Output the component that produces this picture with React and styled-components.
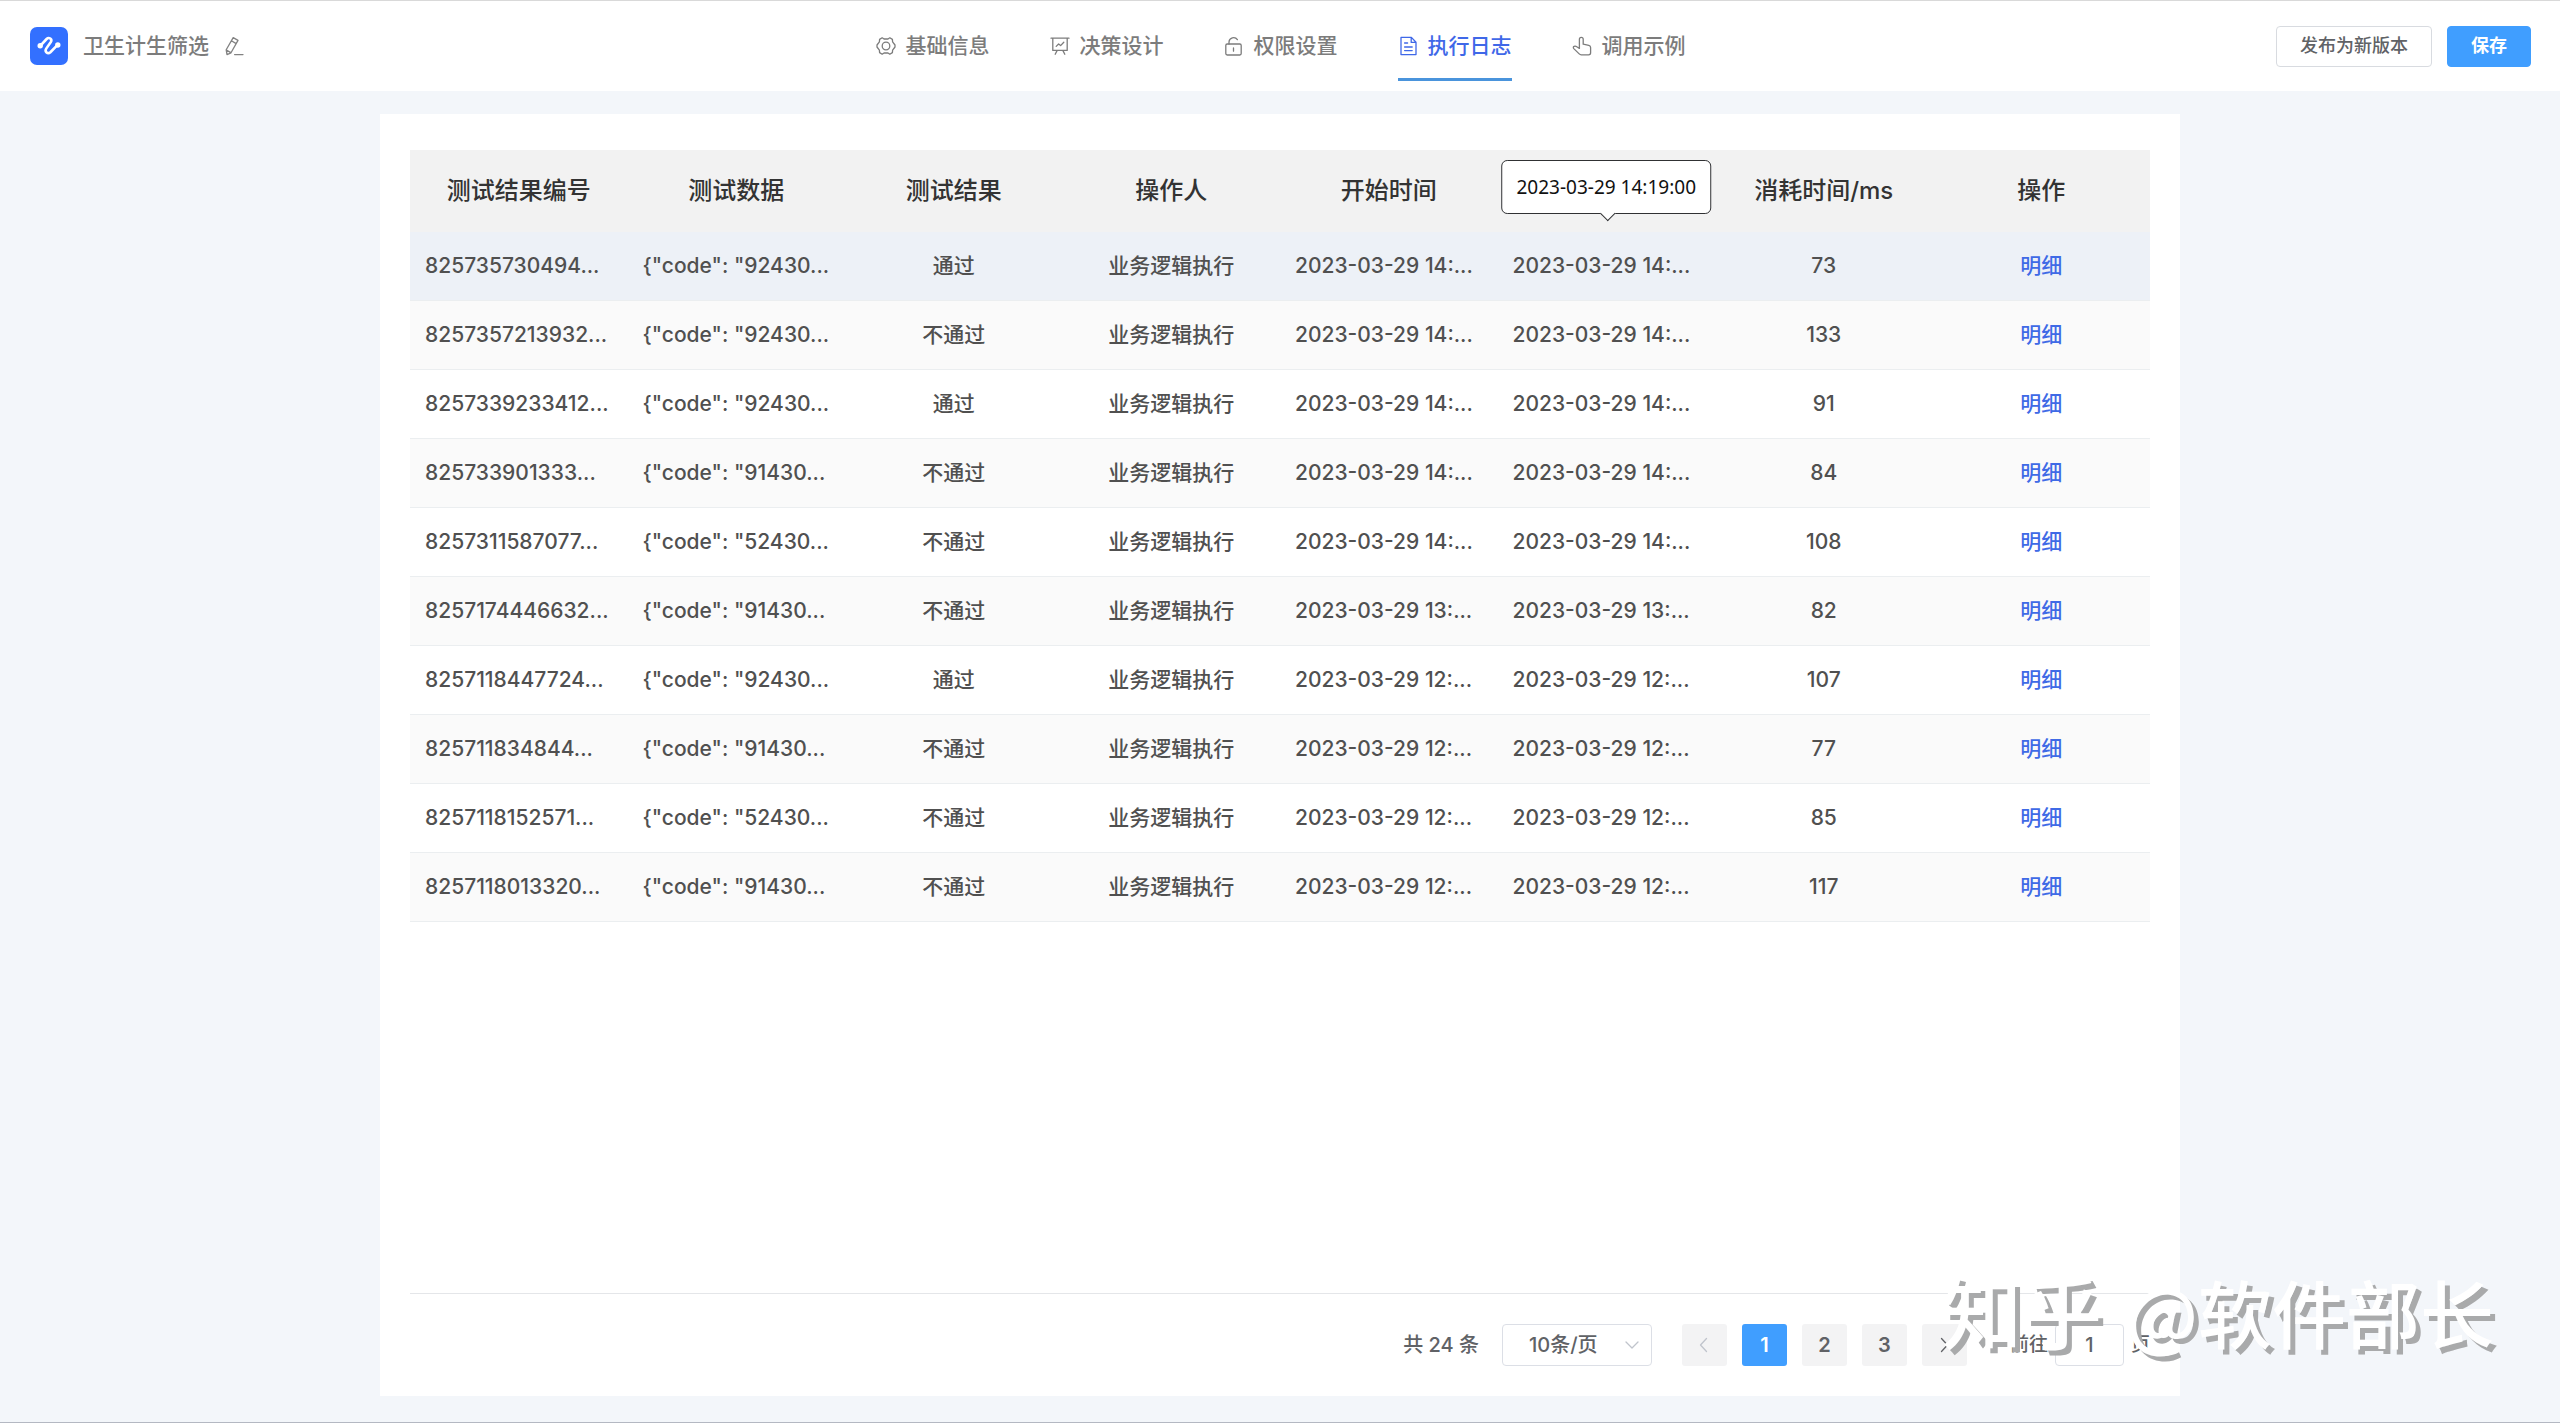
import React, { useState } from 'react';
import styled, { createGlobalStyle } from 'styled-components';

const GlobalStyle = createGlobalStyle`
  * {
    box-sizing: border-box;
  }

  body {
    margin: 0;
    background: #f3f6fa;
    font-family: Inter, 'Noto Sans CJK SC', sans-serif;
    font-weight: 500;
    color: #505050;
  }

  button, input, select {
    font-family: inherit;
    font-weight: inherit;
  }
`;

const Page = styled.div`
  display: flex;
  flex-direction: column;
  min-height: 100vh;
  border-top: 1px solid #d9d9d9;
  border-bottom: 1px solid #b4b8c2;
`;

const Header = styled.header`
  display: grid;
  grid-template-columns: 1fr auto 1fr;
  align-items: center;
  height: 90px;
  padding: 0 29px 0 30px;
  background: #fff;
`;

const Brand = styled.div`
  display: flex;
  align-items: center;
  gap: 15px;
`;

const Logo = styled.svg`
  width: 38px;
  height: 38px;
`;

const Title = styled.h1`
  margin: 0;
  font-size: 21px;
  line-height: 30px;
  font-weight: 500;
  color: #7c7c7c;
`;

const EditButton = styled.button`
  display: flex;
  padding: 0;
  border: 0;
  background: none;
  color: #828282;
  cursor: pointer;
`;

const Icon = styled.svg`
  width: 20px;
  height: 20px;
  flex: none;
  fill: none;
  stroke: currentColor;
  stroke-width: 1.3;
  stroke-linecap: round;
  stroke-linejoin: round;
`;

const Tabs = styled.nav`
  display: flex;
  align-self: stretch;
  align-items: center;
  gap: 60px;
`;

const Tab = styled.a`
  display: flex;
  align-items: center;
  gap: 10px;
  height: 70px;
  border-top: 3px solid transparent;
  border-bottom: 3px solid ${props => (props.$active ? '#4a94dc' : 'transparent')};
  font-size: 21px;
  line-height: 30px;
  text-decoration: none;
  color: ${props => (props.$active ? '#3f68e8' : '#7c7c7c')};
`;

const Actions = styled.div`
  display: flex;
  justify-content: flex-end;
  gap: 15px;
`;

const Button = styled.button`
  height: 41px;
  padding: 0 23px;
  border: 1px solid ${props => (props.$primary ? '#409eff' : '#d8dbe0')};
  border-radius: 4px;
  background: ${props => (props.$primary ? '#409eff' : '#fff')};
  color: ${props => (props.$primary ? '#fff' : '#606266')};
  font-size: 18px;
  font-weight: ${props => (props.$primary ? 700 : 500)};
  line-height: 24px;
  cursor: pointer;
`;

const Panel = styled.main`
  display: flex;
  flex: 1;
  flex-direction: column;
  width: calc(100% - 760px);
  min-width: 1200px;
  margin: 23px auto 26px;
  padding: 36px 30px 0;
  background: #fff;
`;

const Table = styled.table`
  width: 100%;
  border-collapse: separate;
  border-spacing: 0;
  table-layout: fixed;
`;

const HeadCell = styled.th`
  height: 82px;
  padding: 0;
  background: #f2f2f2;
  color: #333;
  font-size: 24px;
  font-weight: 500;
  line-height: 34px;
`;

const Row = styled.tr`
  background: ${props => (props.$hovered ? '#edf1f7' : '#fff')};

  &:nth-child(even) {
    background: #fafafa;
  }
`;

const Cell = styled.td`
  height: 69px;
  padding: 0 15px;
  border-bottom: 1px solid #ebeef0;
  font-size: 21px;
  line-height: 30px;
  text-align: ${props => (props.$clipped ? 'left' : 'center')};
  white-space: nowrap;
`;

const DetailLink = styled.a`
  color: #3f6ae6;
  text-decoration: none;
`;

const TipAnchor = styled.div`
  position: relative;
`;

const Tooltip = styled.div`
  position: absolute;
  left: 50%;
  bottom: 67px;
  padding: 12px 14px;
  border: 1px solid #303133;
  border-radius: 6px;
  background: #fff;
  color: #111;
  font-family: 'Noto Sans', sans-serif;
  font-size: 19px;
  font-weight: 400;
  line-height: 28px;
  transform: translateX(-50%);

  &::after {
    content: '';
    position: absolute;
    left: 50%;
    bottom: -6px;
    width: 10px;
    height: 10px;
    margin-left: -4px;
    border: solid #303133;
    border-width: 0 1px 1px 0;
    background: #fff;
    transform: rotate(45deg);
  }
`;

const Footer = styled.footer`
  display: flex;
  align-items: center;
  justify-content: flex-end;
  height: 103px;
  margin-top: auto;
  border-top: 1px solid #e4e6e9;
  font-size: 20px;
  line-height: 28px;
  color: #606266;
`;

const SizePicker = styled.div`
  display: flex;
  align-items: center;
  width: 150px;
  height: 42px;
  margin: 0 30px 0 23px;
  padding-right: 9px;
  border: 1px solid #dcdfe6;
  border-radius: 4px;
  color: #c0c4cc;
`;

const SizeSelect = styled.select`
  flex: 1;
  min-width: 0;
  height: 40px;
  padding: 0 0 0 26px;
  border: 0;
  background: none;
  appearance: none;
  color: #606266;
  font-size: 20px;
`;

const Pager = styled.div`
  display: flex;
  gap: 15px;
`;

const PageButton = styled.button`
  display: flex;
  align-items: center;
  justify-content: center;
  width: 45px;
  height: 42px;
  padding: 0;
  border: 0;
  border-radius: 3px;
  background: ${props => (props.$active ? '#409eff' : '#f3f3f4')};
  color: ${props => (props.$active ? '#fff' : '#606266')};
  font-size: 20px;
  font-weight: 600;

  &:disabled {
    color: #c0c4cc;
  }
`;

const Jump = styled.label`
  display: flex;
  align-items: center;
  gap: 7px;
  margin-left: 43px;
  font-size: 19px;
`;

const JumpInput = styled.input`
  width: 69px;
  height: 42px;
  border: 1px solid #dcdfe6;
  border-radius: 4px;
  color: #606266;
  font-size: 20px;
  text-align: center;
`;

const Watermark = styled.div`
  position: fixed;
  right: 66px;
  bottom: 57px;
  display: flex;
  align-items: baseline;
  gap: 24px;
  color: #fff;
  font-family: 'Noto Sans CJK SC', sans-serif;
  font-size: 74px;
  font-weight: 500;
  line-height: 110px;
  text-shadow: 5px 5px 0 #a9aaab;
  white-space: nowrap;
  pointer-events: none;
`;

const WatermarkSite = styled.span`
  font-size: 80px;
`;

const GearIcon = () => (
  <Icon viewBox="0 0 20 20">
    <path d="M6.2 1.8 8 3h4l1.8-1.2 2.6 1.6.2 2.4 2.4 3.2v2l-2.4 3.2-.2 2.4-2.6 1.6L12 17H8l-1.8 1.2-2.6-1.6-.2-2.4L1 11V9l2.4-3.2.2-2.4z" />
    <circle cx="10" cy="10" r="3.8" />
  </Icon>
);

const BoardIcon = () => (
  <Icon viewBox="0 0 20 20">
    <path d="M1 2.2h18M2.8 2.2v12.2h14.4V2.2M7.2 14.4l-2 3.8M12.8 14.4l2 3.8M6.2 10.4l2.4-2.4 2 1.6 3.2-3.4" />
  </Icon>
);

const LockIcon = () => (
  <Icon viewBox="0 0 20 20">
    <rect x="1.8" y="8" width="15.4" height="11" rx="1.4" />
    <path d="M5 8V6a4.6 4.6 0 0 1 8.4-2.4M9.5 12v3.2" />
  </Icon>
);

const FileIcon = () => (
  <Icon viewBox="0 0 20 20">
    <path d="M3 1.4h10.4l4.6 4.8v12.4H3zM13.2 1.6v4.8H18M6.6 7h3M6.6 11h7.6M6.6 14.6h7.6" />
  </Icon>
);

const HandIcon = () => (
  <Icon viewBox="0 0 20 20">
    <path d="M7.4 12.4V3.2a1.9 1.9 0 0 1 3.8 0v5l5.6 1.2c1.2.3 1.8 1.1 1.8 2.2v5.2c0 1.2-.8 2-2 2H9.2c-.8 0-1.4-.3-2-.9l-5.4-5.3c-.7-.8-.6-1.8.2-2.2 1-.6 2-.3 2.8.4z" />
  </Icon>
);

const PencilIcon = () => (
  <Icon viewBox="0 0 20 20">
    <path d="m9.2 1.6 4.8 2.8-7 12.4-4 1.8-.8-4.8zM7.4 4.8l4.8 2.8M2.4 14l4.4 2.6M10.6 18.6H19" />
  </Icon>
);

const Chevron = ({ d }) => (
  <Icon viewBox="0 0 20 20">
    <path d={d} />
  </Icon>
);

const TABS = [
  { label: '基础信息', icon: GearIcon },
  { label: '决策设计', icon: BoardIcon },
  { label: '权限设置', icon: LockIcon },
  { label: '执行日志', icon: FileIcon },
  { label: '调用示例', icon: HandIcon },
];

// 结束时间 sits under the open tooltip, so its heading stays empty
const COLUMNS = ['测试结果编号', '测试数据', '测试结果', '操作人', '开始时间', '', '消耗时间/ms', '操作'];

// [编号, code, 结果, 小时, 耗时]
const LOGS = [
  ['825735730494...', '92430', '通过', 14, 73],
  ['8257357213932...', '92430', '不通过', 14, 133],
  ['8257339233412...', '92430', '通过', 14, 91],
  ['825733901333...', '91430', '不通过', 14, 84],
  ['8257311587077...', '52430', '不通过', 14, 108],
  ['8257174446632...', '91430', '不通过', 13, 82],
  ['8257118447724...', '92430', '通过', 12, 107],
  ['825711834844...', '91430', '不通过', 12, 77],
  ['8257118152571...', '52430', '不通过', 12, 85],
  ['8257118013320...', '91430', '不通过', 12, 117],
];

function LogRow({ log, hovered }) {
  const [id, code, result, hour, cost] = log;
  const time = `2023-03-29 ${hour}:...`;

  return (
    <Row $hovered={hovered}>
      <Cell $clipped>{id}</Cell>
      <Cell $clipped>{`{"code": "${code}...`}</Cell>
      <Cell>{result}</Cell>
      <Cell>业务逻辑执行</Cell>
      <Cell $clipped>{time}</Cell>
      <Cell $clipped>
        {hovered ? (
          <TipAnchor>
            {time}
            <Tooltip role="tooltip">2023-03-29 14:19:00</Tooltip>
          </TipAnchor>
        ) : (
          time
        )}
      </Cell>
      <Cell>{cost}</Cell>
      <Cell>
        <DetailLink href="#detail">明细</DetailLink>
      </Cell>
    </Row>
  );
}

function Pagination() {
  const [page, setPage] = useState(1);

  return (
    <Footer>
      <span>共 24 条</span>
      <SizePicker>
        <SizeSelect aria-label="每页条数" defaultValue="10">
          <option value="10">10条/页</option>
        </SizeSelect>
        <Chevron d="m4 7 6 6 6-6" />
      </SizePicker>
      <Pager>
        <PageButton aria-label="上一页" disabled={page === 1} onClick={() => setPage(page - 1)}>
          <Chevron d="m12.5 3.5-6 6.5 6 6.5" />
        </PageButton>
        {[1, 2, 3].map(n => (
          <PageButton key={n} $active={n === page} onClick={() => setPage(n)}>
            {n}
          </PageButton>
        ))}
        <PageButton aria-label="下一页" disabled={page === 3} onClick={() => setPage(page + 1)}>
          <Chevron d="m7.5 3.5 6 6.5-6 6.5" />
        </PageButton>
      </Pager>
      <Jump>
        前往
        <JumpInput value={page} onChange={e => setPage(Number(e.target.value) || 1)} />
        页
      </Jump>
    </Footer>
  );
}

function App() {
  return (
    <Page>
      <GlobalStyle />
      <Header>
        <Brand>
          <Logo viewBox="0 0 38 38">
            <rect width="38" height="38" rx="7" fill="#3370ff" />
            <path
              d="M10 19.2 16.6 12c2.4-2.4 6 .2 4.2 3l-4.6 6.6c-1.8 3 1.4 6 4.2 3.6l7.4-7.6"
              fill="none"
              stroke="#fff"
              strokeWidth="2.6"
              strokeLinecap="round"
            />
            <circle cx="10.2" cy="18.8" r="2.7" fill="#fff" />
            <circle cx="27.8" cy="18" r="2.7" fill="#fff" />
          </Logo>
          <Title>卫生计生筛选</Title>
          <EditButton aria-label="编辑名称">
            <PencilIcon />
          </EditButton>
        </Brand>
        <Tabs>
          {TABS.map(({ label, icon: TabIcon }) => (
            <Tab key={label} href="#tab" $active={label === '执行日志'}>
              <TabIcon />
              {label}
            </Tab>
          ))}
        </Tabs>
        <Actions>
          <Button>发布为新版本</Button>
          <Button $primary>保存</Button>
        </Actions>
      </Header>
      <Panel>
        <Table>
          <thead>
            <tr>
              {COLUMNS.map(name => (
                <HeadCell key={name}>{name}</HeadCell>
              ))}
            </tr>
          </thead>
          <tbody>
            {LOGS.map((log, i) => (
              <LogRow key={log[0]} log={log} hovered={i === 0} />
            ))}
          </tbody>
        </Table>
        <Pagination />
      </Panel>
      <Watermark>
        <WatermarkSite>知乎</WatermarkSite>
        <span>@软件部长</span>
      </Watermark>
    </Page>
  );
}

export default App;
